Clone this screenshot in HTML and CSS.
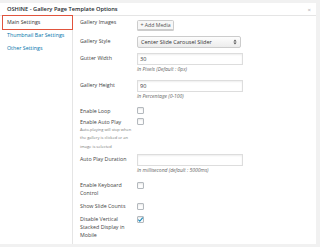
FILE: index.html
```html
<!DOCTYPE html>
<html lang="en">
<head>
    <meta charset="UTF-8">
    <meta name="viewport" content="width=device-width, initial-scale=1.0">
    <title>OSHINE - Gallery Page Template Options</title>
    <link rel="stylesheet" href="styles.css">
</head>
<body>
    <div class="panel">
        <header class="panelHeader">
            <h1>OSHINE - Gallery Page Template Options</h1>
            <span class="closeBtn">&times;</span>
        </header>

        <div class="panelBody">
            <nav class="sidebar">
                <a class="tab active" href="#">Main Settings</a>
                <a class="tab" href="#">Thumbnail Bar Settings</a>
                <a class="tab" href="#">Other Settings</a>
            </nav>

            <main class="options">
                <div class="row">
                    <label class="label">Gallery Images</label>
                    <div class="control">
                        <button class="mediaBtn" type="button">+ Add Media</button>
                    </div>
                </div>

                <div class="row">
                    <label class="label boxed">Gallery Style</label>
                    <div class="control">
                        <div class="select">
                            <span>Center Slide Carousel Slider</span>
                            <svg width="4" height="6" viewBox="0 0 4 6">
                                <path d="M0.4 2.4 L2 0.6 L3.6 2.4 Z M0.4 3.6 L2 5.4 L3.6 3.6 Z" fill="#555"/>
                            </svg>
                        </div>
                    </div>
                </div>

                <div class="row">
                    <label class="label boxed">Gutter Width</label>
                    <div class="control">
                        <input class="field" type="text" value="30">
                        <p class="hint">In Pixels (Default : 0px)</p>
                    </div>
                </div>

                <div class="row">
                    <label class="label boxed">Gallery Height</label>
                    <div class="control">
                        <input class="field" type="text" value="90">
                        <p class="hint">In Percentage (0-100)</p>
                    </div>
                </div>

                <div class="row compact">
                    <label class="label">Enable Loop</label>
                    <div class="control">
                        <span class="check"></span>
                    </div>
                </div>

                <div class="row compact">
                    <div class="label">
                        <label>Enable Auto Play</label>
                        <p class="help">Auto-playing will stop when the gallery is clicked or an image is selected</p>
                    </div>
                    <div class="control">
                        <span class="check"></span>
                    </div>
                </div>

                <div class="row">
                    <label class="label boxed">Auto Play Duration</label>
                    <div class="control">
                        <input class="field" type="text" value="">
                        <p class="hint">In millisecond (default : 5000ms)</p>
                    </div>
                </div>

                <div class="row">
                    <label class="label">Enable Keyboard Control</label>
                    <div class="control">
                        <span class="check"></span>
                    </div>
                </div>

                <div class="row">
                    <label class="label">Show Slide Counts</label>
                    <div class="control">
                        <span class="check"></span>
                    </div>
                </div>

                <div class="row">
                    <label class="label">Disable Vertical Stacked Display in Mobile</label>
                    <div class="control">
                        <span class="check checked">
                            <svg width="7" height="7" viewBox="0 0 7 7">
                                <path d="M1.3 3.6 L2.8 5.1 L5.8 1.6" fill="none" stroke="#1e8cbe" stroke-width="1.1"/>
                            </svg>
                        </span>
                    </div>
                </div>
            </main>
        </div>
    </div>
</body>
</html>
```

FILE: styles.css
```css
* {
    box-sizing: border-box;
}
body {
    margin: 0;
    background-color: #f1f1f1;
    font-family: "Open Sans", "Liberation Sans", sans-serif;
    color: #444;
    overflow: hidden;
}

.panel {
    width: 316px;
    height: 241px;
    margin-top: 3px;
    background-color: #fff;
    display: flex;
    flex-direction: column;
}

.panelHeader {
    display: flex;
    justify-content: space-between;
    align-items: center;
    height: 15px;
    padding: 0 5px 0 7px;
    border-bottom: 1px solid #e5e5e5;
}

.panelHeader h1 {
    margin: 0;
    font-size: 5.7px;
    font-weight: 600;
    color: #23282d;
}

.closeBtn {
    font-size: 6px;
    color: #aaa;
    margin-top: 2px;
}

.panelBody {
    display: flex;
    flex: 1;
}

.sidebar {
    width: 73px;
    border-right: 1px solid #e5e5e5;
    padding-left: 3px;
    display: flex;
    flex-direction: column;
}

.tab {
    display: block;
    width: 69px;
    height: 13px;
    line-height: 13px;
    padding-left: 4px;
    font-size: 5.3px;
    color: #0073aa;
    text-decoration: none;
}

.tab.active {
    color: #333;
    outline: 1px solid #e0533d;
}

.options {
    flex: 1;
    padding: 2px 0 0 7px;
}

.row {
    display: flex;
    align-items: flex-start;
    margin-bottom: 5px;
}

.row.compact {
    margin-bottom: 3px;
}

.label {
    display: block;
    width: 52px;
    margin-right: 5px;
    font-size: 5.3px;
    line-height: 8px;
    color: #444;
}

.label.boxed {
    padding-top: 1px;
}

.help {
    margin: 0;
    font-size: 4px;
    line-height: 8.5px;
    color: #777;
}

.mediaBtn {
    display: block;
    height: 10px;
    margin: 2px 0 1px 0;
    padding: 0 2.5px;
    font-family: inherit;
    font-size: 5.2px;
    line-height: 8px;
    color: #555;
    background-color: #f7f7f7;
    border: 1px solid #ccc;
    border-radius: 1.5px;
    box-shadow: 0 1px 0 #ccc;
}

.select {
    display: flex;
    justify-content: space-between;
    align-items: center;
    width: 104px;
    height: 12px;
    padding: 0 3px 0 3px;
    font-size: 5.5px;
    color: #333;
    background: linear-gradient(#fdfdfd, #ececec);
    border: 1px solid #ccc;
    border-radius: 2px;
}

.field {
    display: block;
    width: 106px;
    height: 12px;
    margin: 0;
    padding: 0 2px;
    font-family: inherit;
    font-size: 5.5px;
    color: #333;
    border: 1px solid #ddd;
    box-shadow: inset 0 1px 2px rgba(0, 0, 0, 0.07);
    outline: none;
}

.hint {
    margin: 1px 0 2px 0;
    font-size: 5px;
    line-height: 7px;
    font-style: italic;
    color: #666;
}

.check {
    display: block;
    width: 7px;
    height: 7px;
    margin-top: 0.5px;
    border: 1px solid #b4b9be;
    border-radius: 1px;
    background-color: #fff;
    box-shadow: inset 0 1px 2px rgba(0, 0, 0, 0.1);
    position: relative;
}

.check svg {
    position: absolute;
    left: -1px;
    top: -1px;
}
```
